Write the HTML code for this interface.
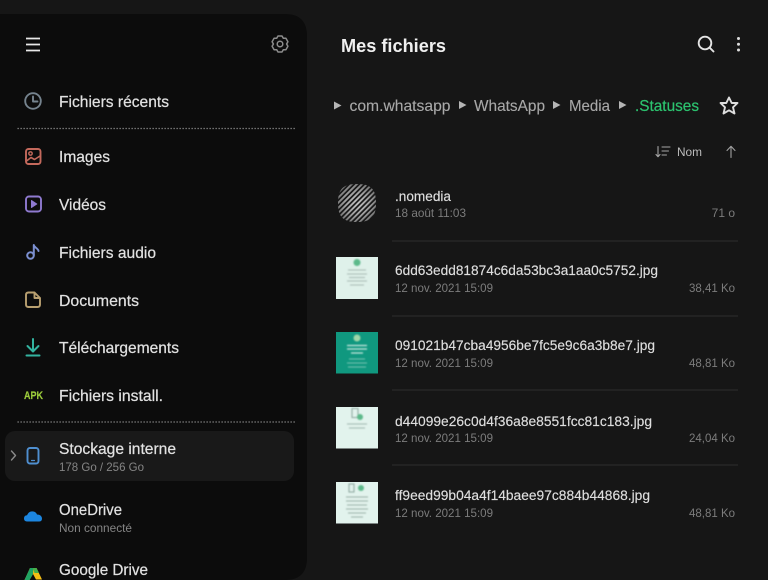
<!DOCTYPE html>
<html lang="fr">
<head>
<meta charset="utf-8">
<title>Mes fichiers</title>
<style>
html,body{margin:0;padding:0;width:768px;height:580px;overflow:hidden;background:#161616}
svg{display:block;filter:blur(.35px)}
text{font-family:"Liberation Sans",sans-serif}
.m{fill:#e2e2e2;stroke:#e2e2e2;stroke-width:.22px;font-size:16px}
.s{fill:#858585;font-size:12px}
.n{fill:#dedede;stroke:#dedede;stroke-width:.15px;font-size:13.5px}
.d{fill:#7c7c7c;font-size:12px}
.b{fill:#a8a8a8;stroke:#a8a8a8;stroke-width:.12px;font-size:16px}
.i{fill:none;stroke-width:1.9;stroke-linecap:round;stroke-linejoin:round}
.t{filter:blur(.7px)}
</style>
</head>
<body>
<svg width="768" height="580" viewBox="0 0 768 580" xmlns="http://www.w3.org/2000/svg">
<defs>
<pattern id="h" width="3.6" height="3.6" patternUnits="userSpaceOnUse" patternTransform="rotate(-45)">
<rect width="3.6" height="1.9" fill="#fff"/>
</pattern>
<radialGradient id="f" gradientUnits="userSpaceOnUse" cx="357" cy="203" r="20"><stop offset="0" stop-color="#c4c4c4"/><stop offset=".6" stop-color="#a0a0a0"/><stop offset="1" stop-color="#7a7a7a"/></radialGradient>
<mask id="hm" maskUnits="userSpaceOnUse" x="330" y="175" width="60" height="60"><rect x="330" y="175" width="60" height="60" fill="url(#h)"/></mask>
</defs>
<rect width="768" height="580" fill="#161616"/>
<path d="M0 14H285Q307 14 307 36V558Q307 580 285 580H0Z" fill="#0c0c0c"/>

<!-- header of drawer -->
<path d="M26 38.500H40M26 44.500H40M26 50.500H40" stroke="#e8e8e8" stroke-width="1.800"/>
<path class="i" stroke="#8c8c8c" style="stroke-width:1.500" d="M278 36 282 36 283.300 38.300 285.900 38.300 287.900 41.700 286.600 44 287.900 46.300 285.900 49.700 283.300 49.700 282 52 278 52 276.700 49.700 274.100 49.700 272.100 46.300 273.400 44 272.100 41.700 274.100 38.300 276.700 38.300Z"/>
<circle cx="280" cy="44" r="2.800" fill="none" stroke="#8c8c8c" stroke-width="1.500"/>

<!-- drawer items -->
<circle cx="33" cy="101" r="7.800" class="i" stroke="#75838e"/>
<path d="M33 96.500V101.500H37.500" class="i" stroke="#75838e"/>
<text x="59" y="107" class="m" textLength="110" lengthAdjust="spacingAndGlyphs">Fichiers récents</text>
<line x1="17.500" y1="128.500" x2="295" y2="128.500" stroke="#8a8a8a" stroke-width="1.300" stroke-dasharray="1.300 1.700"/>

<rect x="26" y="149" width="14.500" height="15" rx="2.500" class="i" stroke="#c4695c"/>
<circle cx="30.500" cy="153.500" r="1.700" fill="none" stroke="#c4695c" stroke-width="1.400"/>
<path d="M26.500 161L31 157.500L34.500 159.500L40 156" class="i" stroke="#c4695c" style="stroke-width:1.600"/>
<text x="59" y="162" class="m" textLength="51" lengthAdjust="spacingAndGlyphs">Images</text>

<rect x="26" y="196.500" width="15" height="15" rx="3" class="i" stroke="#8f7ad0"/>
<path d="M31.500 200.500L36.800 204L31.500 207.500Z" fill="#8f7ad0" stroke="#8f7ad0" stroke-width="1" stroke-linejoin="round"/>
<text x="59" y="210" class="m" textLength="47" lengthAdjust="spacingAndGlyphs">Vidéos</text>

<circle cx="30.500" cy="255.500" r="3.300" class="i" stroke="#7b8fd0" style="stroke-width:2"/>
<path d="M33.800 255V245C34 247.500 38 248 38.500 251" class="i" stroke="#7b8fd0" style="stroke-width:2"/>
<text x="59" y="258" class="m" textLength="97" lengthAdjust="spacingAndGlyphs">Fichiers audio</text>

<path d="M28.500 292.500H34.500L40 298V304.500Q40 307 37.500 307H28.500Q26 307 26 304.500V295Q26 292.500 28.500 292.500ZM34.500 292.500V298H40" class="i" stroke="#b9a070"/>
<text x="59" y="306" class="m" textLength="80" lengthAdjust="spacingAndGlyphs">Documents</text>

<path d="M33 339V351M27.500 346L33 351.500L38.500 346" class="i" stroke="#33b3a0" style="stroke-width:2"/>
<path d="M26.500 355.500H39.500" class="i" stroke="#33b3a0" style="stroke-width:2"/>
<text x="59" y="353" class="m" textLength="120" lengthAdjust="spacingAndGlyphs">Téléchargements</text>

<text x="24" y="399" fill="#9ccc3c" stroke="#9ccc3c" stroke-width=".2" font-size="11" font-weight="bold" textLength="19" lengthAdjust="spacingAndGlyphs">APK</text>
<text x="59" y="401" class="m" textLength="104" lengthAdjust="spacingAndGlyphs">Fichiers install.</text>
<line x1="17.500" y1="422" x2="295" y2="422" stroke="#8a8a8a" stroke-width="1.300" stroke-dasharray="1.300 1.700"/>

<rect x="5" y="431" width="289" height="50" rx="10" fill="#191919"/>
<path d="M11.500 451L15.500 455.500L11.500 460" class="i" stroke="#8a8a8a" style="stroke-width:1.400"/>
<rect x="27.500" y="448" width="11" height="15.500" rx="2.500" class="i" stroke="#4f8fd0"/>
<path d="M31.500 460.500H34.500" class="i" stroke="#4f8fd0" style="stroke-width:1.200"/>
<text x="59" y="454" class="m" textLength="117" lengthAdjust="spacingAndGlyphs">Stockage interne</text>
<text x="59" y="471" class="s" textLength="85" lengthAdjust="spacingAndGlyphs">178 Go / 256 Go</text>

<path d="M27.500 521.500Q24 521.500 24 518.500Q24 515.500 27 515.300Q29 510.500 33.500 511.500Q36 512 37 514.500Q41.500 514.500 42 518.500Q42 521.500 39 521.500Z" fill="#1c86e0"/>
<text x="59" y="515" class="m" textLength="63" lengthAdjust="spacingAndGlyphs">OneDrive</text>
<text x="59" y="532" class="s" textLength="73" lengthAdjust="spacingAndGlyphs">Non connecté</text>

<path d="M30 568H36.500L42 579.500H36L33 574L29.500 580H24.500Z" fill="#f5bf14"/>
<path d="M30 568H33.500L33 574L29.500 580H24.500Z" fill="#1fa463"/>
<path d="M33 568H36.500L39 573H34.500Z" fill="#48b04a"/>
<path d="M30 576H36V580H29.500Z" fill="#1c6fd0" opacity=".0"/>
<text x="59" y="575" class="m" textLength="89" lengthAdjust="spacingAndGlyphs">Google Drive</text>

<!-- app bar -->
<text x="341" y="52" fill="#f0f0f0" font-size="18.500" font-weight="bold" textLength="105" lengthAdjust="spacingAndGlyphs">Mes fichiers</text>
<circle cx="705" cy="43" r="6.300" class="i" stroke="#e4e4e4"/>
<path d="M709.800 47.800L713.500 51.500" class="i" stroke="#e4e4e4"/>
<circle cx="738.500" cy="38.500" r="1.500" fill="#dcdcdc"/>
<circle cx="738.500" cy="44.300" r="1.500" fill="#dcdcdc"/>
<circle cx="738.500" cy="50" r="1.500" fill="#dcdcdc"/>

<!-- breadcrumb -->
<path d="M334 101.500L341.500 105.500L334 109.500Z" fill="#b5b5b5"/>
<text x="349.500" y="111" class="b" textLength="101" lengthAdjust="spacingAndGlyphs">com.whatsapp</text>
<path d="M459 101L466.500 105L459 109Z" fill="#b5b5b5"/>
<text x="474" y="111" class="b" textLength="71" lengthAdjust="spacingAndGlyphs">WhatsApp</text>
<path d="M553 101L560.500 105L553 109Z" fill="#b5b5b5"/>
<text x="569" y="111" class="b" textLength="41" lengthAdjust="spacingAndGlyphs">Media</text>
<path d="M619 101L626.500 105L619 109Z" fill="#b5b5b5"/>
<text x="635" y="111" fill="#2cc36f" stroke="#2cc36f" stroke-width=".2" font-size="16px" textLength="64" lengthAdjust="spacingAndGlyphs">.Statuses</text>
<path d="M729 97.500L731.700 103H737.500L733 107.300L734.500 113.500L729 110.300L723.500 113.500L725 107.300L720.500 103H726.300Z" class="i" stroke="#dedede"/>

<!-- sort -->
<path d="M658 146.500V156.500M656 154.500L658 156.700L660 154.500" class="i" stroke="#a5a5a5" style="stroke-width:1.100"/>
<path d="M662 147H670M662 151H668.500M662 155H666.500" class="i" stroke="#a5a5a5" style="stroke-width:1.100"/>
<text x="677" y="156" fill="#bdbdbd" font-size="11.500px" textLength="25" lengthAdjust="spacingAndGlyphs">Nom</text>
<path d="M731 146.500V157.500M727 150.500L731 146.300L735 150.500" class="i" stroke="#a0a0a0" style="stroke-width:1.100"/>

<!-- .nomedia -->
<path mask="url(#hm)" d="M357 184C371 184 376 189 376 203C376 217 371 222 357 222C343 222 338 217 338 203C338 189 343 184 357 184Z" fill="url(#f)"/>
<text x="395" y="201" class="n" textLength="56" lengthAdjust="spacingAndGlyphs">.nomedia</text>
<text x="395" y="217" class="d" textLength="71" lengthAdjust="spacingAndGlyphs">18 août 11:03</text>
<text x="735" y="217" class="d" text-anchor="end">71 o</text>
<line x1="392" y1="241" x2="738" y2="241" stroke="#2b2b2b" stroke-width="1.200"/>

<!-- row 1 -->
<rect x="336" y="257" width="42" height="42" fill="#dff1ea"/>
<g class="t">
<circle cx="357" cy="262.500" r="3.500" fill="#5cb98a"/>
<path d="M348 270H366M347 274H367M349 277.500H365M347 281H367M350 285H364" stroke="#a7b8b2" stroke-width="1"/>
</g>
<text x="395" y="275" class="n" textLength="263" lengthAdjust="spacingAndGlyphs">6dd63edd81874c6da53bc3a1aa0c5752.jpg</text>
<text x="395" y="292" class="d" textLength="98" lengthAdjust="spacingAndGlyphs">12 nov. 2021 15:09</text>
<text x="735" y="292" class="d" text-anchor="end" textLength="46" lengthAdjust="spacingAndGlyphs">38,41 Ko</text>
<line x1="392" y1="316" x2="738" y2="316" stroke="#2b2b2b" stroke-width="1.200"/>

<!-- row 2 -->
<rect x="336" y="332" width="42" height="41.500" fill="#10987f"/>
<g class="t">
<circle cx="357" cy="338" r="3.500" fill="#9fd7a8"/>
<path d="M347 345.500H367M347 349H367M351 353H363" stroke="#cfe9e2" stroke-width="1.200"/>
<path d="M349 359H365M347 363H367M348 367H366" stroke="#7cc7b6" stroke-width="1"/>
</g>
<text x="395" y="350" class="n" textLength="260" lengthAdjust="spacingAndGlyphs">091021b47cba4956be7fc5e9c6a3b8e7.jpg</text>
<text x="395" y="367" class="d" textLength="98" lengthAdjust="spacingAndGlyphs">12 nov. 2021 15:09</text>
<text x="735" y="367" class="d" text-anchor="end" textLength="46" lengthAdjust="spacingAndGlyphs">48,81 Ko</text>
<line x1="392" y1="390" x2="738" y2="390" stroke="#2b2b2b" stroke-width="1.200"/>

<!-- row 3 -->
<rect x="336" y="407" width="42" height="41.500" fill="#e2f3ed"/>
<g class="t">
<rect x="352" y="408.500" width="6" height="9" fill="none" stroke="#8ba59c" stroke-width="1"/>
<circle cx="360" cy="417" r="3" fill="#5cb98a"/>
<path d="M347 424H367M349 428H365" stroke="#9fb5ad" stroke-width="1"/>
</g>
<text x="395" y="426" class="n" textLength="257" lengthAdjust="spacingAndGlyphs">d44099e26c0d4f36a8e8551fcc81c183.jpg</text>
<text x="395" y="442" class="d" textLength="98" lengthAdjust="spacingAndGlyphs">12 nov. 2021 15:09</text>
<text x="735" y="442" class="d" text-anchor="end" textLength="46" lengthAdjust="spacingAndGlyphs">24,04 Ko</text>
<line x1="392" y1="465" x2="738" y2="465" stroke="#2b2b2b" stroke-width="1.200"/>

<!-- row 4 -->
<rect x="336" y="482" width="42" height="41.500" fill="#e2f3ed"/>
<g class="t">
<rect x="349" y="484" width="5" height="8" fill="none" stroke="#8ba59c" stroke-width="1"/>
<circle cx="361" cy="488" r="3" fill="#5cb98a"/>
<path d="M346 497H368M346 501H368M347 505H367M346 509H368M348 513H366M351 517H363" stroke="#98aea6" stroke-width="1"/>
</g>
<text x="395" y="500" class="n" textLength="255" lengthAdjust="spacingAndGlyphs">ff9eed99b04a4f14baee97c884b44868.jpg</text>
<text x="395" y="517" class="d" textLength="98" lengthAdjust="spacingAndGlyphs">12 nov. 2021 15:09</text>
<text x="735" y="517" class="d" text-anchor="end" textLength="46" lengthAdjust="spacingAndGlyphs">48,81 Ko</text>
</svg>
</body>
</html>
